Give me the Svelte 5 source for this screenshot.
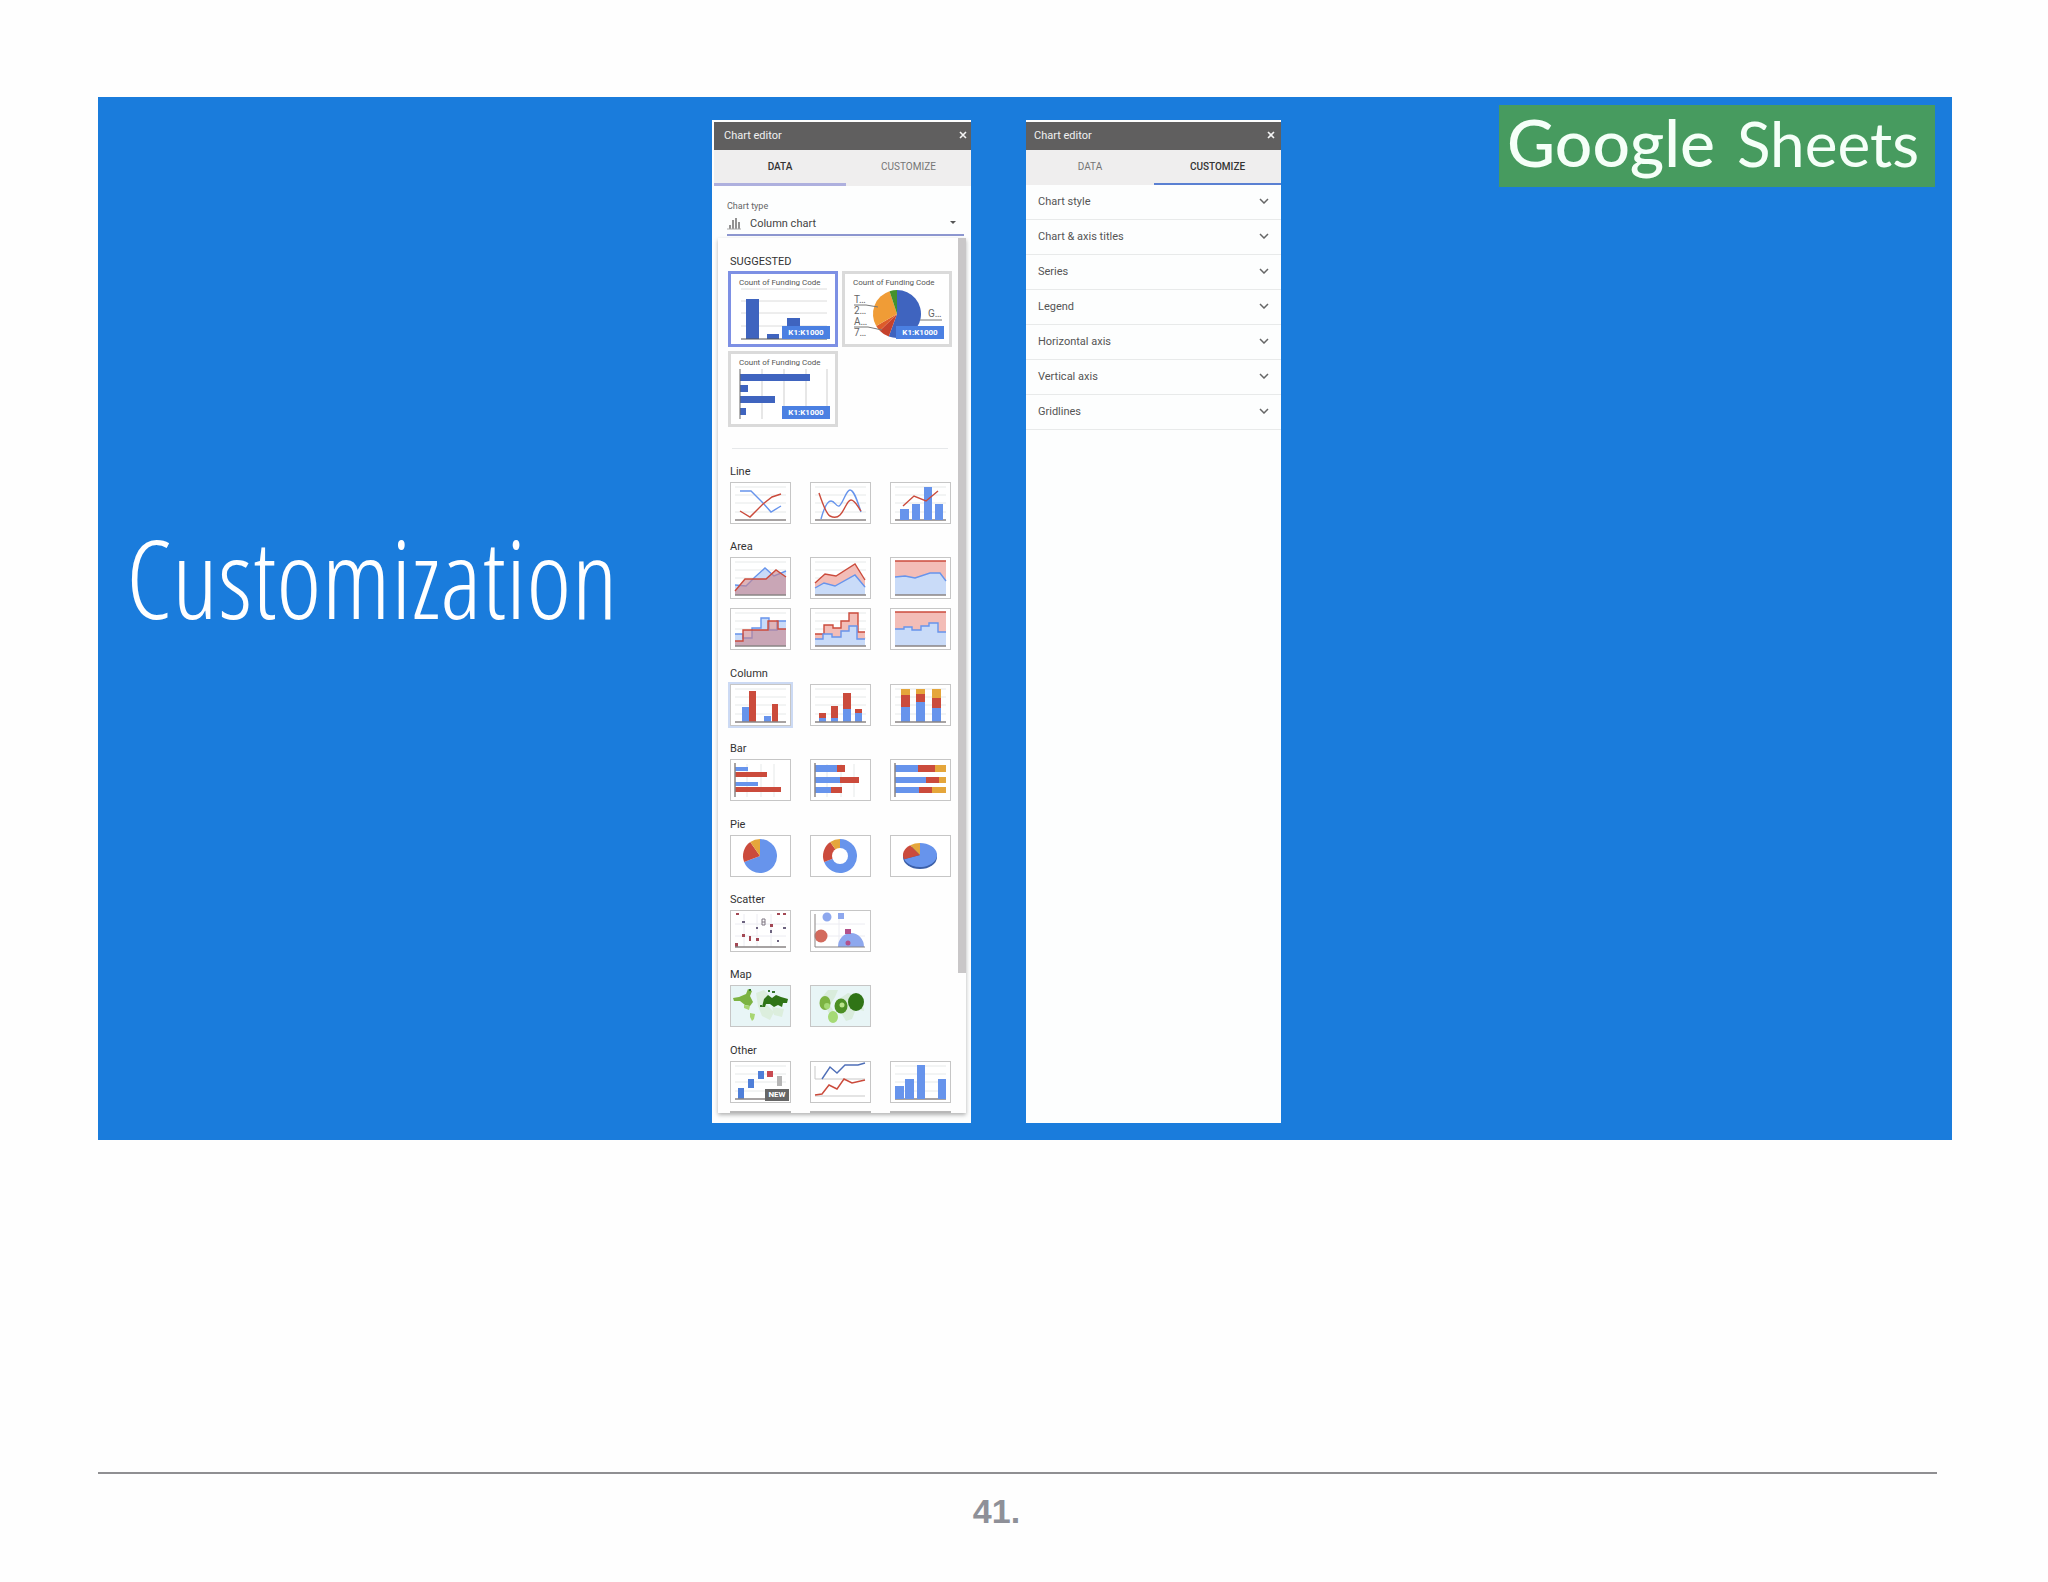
<script lang="ts">
	type Shape = {
		d: string
		fill?: string
		stroke?: string
		width?: number
	}

	type Thumb = {
		name: string
		shapes: Shape[]
		selected?: boolean
		background?: string
		tag?: string
	}

	type Section = {
		title: string
		thumbs: Thumb[]
	}

	const BLUE = '#6794ec'
	const RED = '#cb4b3c'
	const YELLOW = '#e5a63b'
	const DARK_BLUE = '#3f64bf'
	const PALE_BLUE = '#c9dbf8'
	const PALE_RED = '#f3bdb7'
	const GRID = '#e6e9e9'
	const AXIS = '#8a8585'

	function rect(x: number, y: number, w: number, h: number): string {
		return `M${x},${y}h${w}v${h}h${-w}z`;
	}

	function ellipse(cx: number, cy: number, rx: number, ry: number = rx): string {
		return `M${cx - rx},${cy}a${rx},${ry} 0 1 0 ${2 * rx},0a${rx},${ry} 0 1 0 ${-2 * rx},0z`;
	}

	// angles are in degrees, clockwise from 12 o'clock
	function sector(cx: number, cy: number, rx: number, ry: number, from: number, to: number): string {
		const point = (angle: number) => {
			const a = angle * Math.PI / 180;
			return `${(cx + rx * Math.sin(a)).toFixed(2)},${(cy - ry * Math.cos(a)).toFixed(2)}`;
		}
		return `M${cx},${cy}L${point(from)}A${rx},${ry} 0 ${to - from > 180 ? 1 : 0} 1 ${point(to)}z`;
	}

	function fill(color: string, ...paths: string[]): Shape {
		return { d: paths.join(''), fill: color };
	}

	function line(color: string, d: string, width = 1.4): Shape {
		return { d, stroke: color, width };
	}

	const rowGrid = line(GRID, 'M5,5H56M5,13H56M5,21H56M5,30H56', 1)
	const colGrid = line(GRID, 'M17,5V38M31,5V38M44,5V38', 1)
	const base = line(AXIS, 'M5,38H56', 1.5)
	const sideAxis = line(AXIS, 'M5,4V38', 1.5)

	function area(topLine: string, color: string, pale: string): Shape[] {
		return [fill(pale, `${topLine}V38H5z`), line(color, topLine)];
	}

	function pie(cy: number, rx: number, ry: number): Shape[] {
		return [
			fill(BLUE, sector(30, cy, rx, ry, 0, 249)),
			fill(RED, sector(30, cy, rx, ry, 249, 325)),
			fill(YELLOW, sector(30, cy, rx, ry, 325, 360))
		];
	}

	const sections: Section[] = [
		{
			title: 'Line',
			thumbs: [
				{ name: 'Line chart', shapes: [rowGrid, base,
					line(BLUE, 'M10,9H21L33,21L41,30L51,24'),
					line(RED, 'M10,29L20,35L33,22L42,15L51,12')] },
				{ name: 'Smooth line chart', shapes: [rowGrid, base,
					line(BLUE, 'M11,37C14,26 17,19 21,19S26,25 29,24C33,22 36,8 40,8S47,18 51,30'),
					line(RED, 'M9,11C12,20 16,32 20,34S27,36 30,33C35,28 37,18 41,18S47,24 51,29')] },
				{ name: 'Combo chart', shapes: [rowGrid, base,
					fill(BLUE, rect(10, 27, 9, 11), rect(22, 22, 8, 16), rect(34, 5, 8, 33), rect(45, 22, 8, 16)),
					line(RED, 'M13,24L24,14L36,19L48,9')] }
			]
		},
		{
			title: 'Area',
			thumbs: [
				{ name: 'Area chart', shapes: [rowGrid,
					...area('M5,28L16,29L25,20L35,11L44,19L56,14', BLUE, PALE_BLUE),
					...area('M5,34L15,22L36,22L46,13L56,20', RED, '#c9828a99'), base] },
				{ name: 'Stacked area chart', shapes: [rowGrid,
					...area('M5,26L15,17L26,19L45,7L55,23', RED, PALE_RED),
					...area('M5,31L14,26L25,29L45,18L55,30', BLUE, PALE_BLUE), base] },
				{ name: '100% stacked area chart', shapes: [
					...area('M5,4H56', RED, PALE_RED),
					...area('M5,20L15,19L25,21L40,16L50,16L56,24', BLUE, PALE_BLUE), base] },
				{ name: 'Stepped area chart', shapes: [rowGrid,
					...area('M5,26H13V30H22V20H31V10H39V22H47V13H56', BLUE, PALE_BLUE),
					...area('M5,33H13V22H38V13H48V21H56', RED, '#c9828a99'), base] },
				{ name: 'Stacked stepped area chart', shapes: [rowGrid,
					...area('M5,26H14V17H23V20H31V13H39V5H48V24H55', RED, PALE_RED),
					...area('M5,31H13V26H22V29H31V23H39V18H47V31H55', BLUE, PALE_BLUE), base] },
				{ name: '100% stacked stepped area chart', shapes: [
					...area('M5,4H56', RED, PALE_RED),
					...area('M5,21H14V19H22V22H31V18H39V15H48V24H56', BLUE, PALE_BLUE), base] }
			]
		},
		{
			title: 'Column',
			thumbs: [
				{ name: 'Column chart', selected: true, shapes: [rowGrid,
					fill(BLUE, rect(12, 23, 7, 15), rect(34, 32, 7, 6)),
					fill(RED, rect(19, 7, 7, 31), rect(42, 20, 6, 18)), base] },
				{ name: 'Stacked column chart', shapes: [rowGrid,
					fill(RED, rect(9, 29, 7, 5), rect(21, 22, 7, 12), rect(33, 9, 8, 16), rect(45, 25, 7, 4)),
					fill(BLUE, rect(9, 34, 7, 4), rect(21, 34, 7, 4), rect(33, 25, 8, 13), rect(45, 29, 7, 9)), base] },
				{ name: '100% stacked column chart', shapes: [rowGrid,
					fill(YELLOW, rect(11, 5, 9, 6), rect(26, 5, 9, 5), rect(42, 5, 9, 9)),
					fill(RED, rect(11, 11, 9, 12), rect(26, 10, 9, 8), rect(42, 14, 9, 10)),
					fill(BLUE, rect(11, 23, 9, 15), rect(26, 18, 9, 20), rect(42, 24, 9, 14)), base] }
			]
		},
		{
			title: 'Bar',
			thumbs: [
				{ name: 'Bar chart', shapes: [colGrid,
					fill(BLUE, rect(5, 8, 13, 4), rect(5, 23, 23, 4)),
					fill(RED, rect(5, 13, 32, 5), rect(5, 28, 46, 5)), sideAxis] },
				{ name: 'Stacked bar chart', shapes: [colGrid,
					fill(BLUE, rect(5, 6, 22, 7), rect(5, 18, 25, 6), rect(5, 28, 16, 6)),
					fill(RED, rect(27, 6, 8, 7), rect(30, 18, 19, 6), rect(21, 28, 11, 6)), sideAxis] },
				{ name: '100% stacked bar chart', shapes: [
					fill(BLUE, rect(5, 6, 23, 7), rect(5, 18, 31, 6), rect(5, 28, 24, 6)),
					fill(RED, rect(28, 6, 17, 7), rect(36, 18, 13, 6), rect(29, 28, 13, 6)),
					fill(YELLOW, rect(45, 6, 11, 7), rect(49, 18, 7, 6), rect(42, 28, 14, 6)), sideAxis] }
			]
		},
		{
			title: 'Pie',
			thumbs: [
				{ name: 'Pie chart', shapes: pie(21, 17, 17) },
				{ name: 'Doughnut chart', shapes: [...pie(21, 17, 17), fill('#fff', ellipse(30, 21, 8))] },
				{ name: '3D pie chart', shapes: [fill('#3b5fa8', ellipse(30, 22, 17, 12)), ...pie(20, 17, 12)] }
			]
		},
		{
			title: 'Scatter',
			thumbs: [
				{ name: 'Scatter chart', shapes: [
					line('#ececf2', 'M5,14H56M5,26H56M14,4V37M27,4V37M41,4V37', 1),
					fill('#a34854', rect(6, 3, 3, 2), rect(47, 3, 3, 2), rect(53, 3, 3, 2), rect(12, 24, 3, 3), rect(5, 33, 3, 4),
						rect(19, 26, 2, 5), rect(26, 28, 3, 3), rect(40, 14, 3, 3)),
					fill('#6d6480', rect(12, 11, 3, 2), rect(26, 17, 2, 2), rect(40, 20, 2, 3), rect(47, 30, 2, 2), rect(53, 17, 3, 2)),
					line('#7c7480', rect(32, 9, 3, 6) + 'M32,12h3', 1), line(AXIS, 'M5,37H56', 1.5)] },
				{ name: 'Bubble chart', shapes: [
					line('#ececf2', 'M5,14H55M5,26H55M29,4V37', 1),
					fill('#8ea8ee', ellipse(17, 7, 4.5), rect(28, 3, 6, 6), 'M28,37a13,14 0 0 1 26,0z'),
					fill('#d36a5d', ellipse(11, 26, 6.5)),
					fill('#b2518a', rect(35, 19, 6, 5), ellipse(38, 33, 2.5)),
					line(AXIS, 'M5,4V37H55', 1)] }
			]
		},
		{
			title: 'Map',
			thumbs: [
				{ name: 'Geo chart', background: '#e8f5f6', shapes: [
					fill('#dceedd', 'M26,8l8,-3l6,6l-4,8l8,8l-4,8l-8,-4l-4,-10z', 'M42,22l12,2l-2,8l-8,-2z'),
					fill('#7cb342', 'M3,13L9,12L16,9L18,4L22,6L20,11L23,17L20,21L15,20L10,16L4,16z'),
					fill('#a8d672', 'M14,20L20,21L19,25L14,23zM20,28L25,29L24,34L22,36L20,32z'),
					fill('#2f7416', 'M34,14L38,10L42,13L46,10L51,12L58,14L57,18L53,18L52,22L48,20L44,22L40,19L36,19L35,22L32,22z'),
					fill('#35762f', rect(38, 5, 2, 2), rect(42, 6, 3, 2), rect(19, 4, 2, 2), rect(30, 20, 2, 2))] },
				{ name: 'Geo chart with markers', background: '#e8f5f6', shapes: [
					fill('#d9ecdc', 'M9,16L18,5L28,5L25,12L20,20L26,30L22,36L17,24z', 'M26,16L38,8L52,12L54,26L46,24L42,34L36,36L30,26z'),
					fill('#7cb342', ellipse(15, 18, 5.5, 7)),
					fill('#a5da75', ellipse(17, 21, 3), ellipse(23, 32, 5, 6)),
					fill('#4c8f24', ellipse(31, 21, 6.5, 7.5)),
					fill('#b9e38c', ellipse(32, 20, 2.5)),
					fill('#2f7416', ellipse(46, 17, 8, 9))] }
			]
		},
		{
			title: 'Other',
			thumbs: [
				{ name: 'Waterfall chart', tag: 'NEW', shapes: [rowGrid,
					fill('#4f7fd9', rect(8, 27, 6, 11), rect(18, 18, 6, 9), rect(28, 10, 6, 8)),
					fill('#c94a52', rect(37, 10, 6, 6)),
					fill('#b5b5b5', rect(47, 15, 5, 10)), base] },
				{ name: 'Timeline chart', shapes: [
					line('#c9c9c9', 'M5,5V18H55M5,35H55', 1),
					line('#4f6fb8', 'M12,18L20,6L27,12L35,4H48L55,2'),
					line(RED, 'M5,34L12,33L19,24L27,28L34,18L42,22L55,19')] },
				{ name: 'Histogram chart', shapes: [rowGrid, base,
					fill(BLUE, rect(5, 25, 9, 13), rect(15, 18, 9, 20), rect(27, 4, 8, 34), rect(48, 18, 8, 20))] }
			]
		}
	]

	const suggested = [
		{
			labels: [],
			shapes: [
				line('#dcdcdc', 'M13,18H99M13,30H99M13,42H99M13,55H99', 1),
				fill(DARK_BLUE, rect(18, 28, 13, 40), rect(39, 63, 12, 5), rect(59, 47, 13, 21)),
				line('#555', 'M13,68H99', 1)
			]
		},
		{
			labels: [
				{ x: 12, y: 32, text: 'T…' },
				{ x: 12, y: 43, text: '2…' },
				{ x: 12, y: 54, text: 'A…' },
				{ x: 12, y: 65, text: '7…' },
				{ x: 86, y: 46, text: 'G…' }
			],
			shapes: [
				fill(DARK_BLUE, sector(55, 43, 24, 24, 0, 200)),
				fill('#c6422c', sector(55, 43, 24, 24, 200, 226)),
				fill('#dd5b2a', sector(55, 43, 24, 24, 226, 240)),
				fill('#f09c36', sector(55, 43, 24, 24, 240, 342)),
				fill('#45912d', sector(55, 43, 24, 24, 342, 360)),
				line('#777', 'M12,34H24L36,36M12,56H26L40,59M78,49H100', 1)
			]
		},
		{
			labels: [],
			shapes: [
				line('#cfcfcf', 'M34,18V68M56,18V68M78,18V68M99,18V68', 1),
				fill(DARK_BLUE, rect(12, 23, 70, 7), rect(12, 34, 8, 7), rect(12, 45, 35, 7), rect(12, 57, 6, 7)),
				line('#666', 'M12,18V68', 1)
			]
		}
	]

	const settings = ['Chart style', 'Chart & axis titles', 'Series', 'Legend', 'Horizontal axis', 'Vertical axis', 'Gridlines']

	let selectedCard = $state(0)
	let chartType = $state('Column chart')
</script>

{#snippet drawing(shapes: Shape[])}
	{#each shapes as shape}
		<path d={shape.d} fill={shape.fill ?? 'none'} stroke={shape.stroke ?? 'none'} stroke-width={shape.width ?? 0} />
	{/each}
{/snippet}

{#snippet header(active: string)}
	<header>
		<h2>Chart editor</h2>
		<button class="close" aria-label="Close">
			<svg width="8" height="8" viewBox="0 0 8 8"><path d="M1,1L7,7M7,1L1,7" stroke="#f4f4f4" stroke-width="1.6" /></svg>
		</button>
	</header>
	<div class="tabs" role="tablist">
		{#each ['DATA', 'CUSTOMIZE'] as tab}
			<button role="tab" aria-selected={tab === active} class:active={tab === active}>{tab}</button>
		{/each}
	</div>
{/snippet}

<main>
	<section class="slide">
		<h1>Customization</h1>

		<div class="panels">
			<div class="panel data">
				{@render header('DATA')}

				<div class="chart-type">
					<label for="chart-type">Chart type</label>
					<div class="picker">
						<svg width="14" height="13" viewBox="0 0 14 13">
							<path d="M3,12V8M6,12V3M9,12V1M12,12V5" stroke="#666" stroke-width="1.4" />
							<path d="M0,12H14" stroke="#aaa" stroke-width="1" />
						</svg>
						<select id="chart-type" bind:value={chartType}>
							<option>Column chart</option>
							<option>Pie chart</option>
							<option>Bar chart</option>
						</select>
						<svg width="6" height="4" viewBox="0 0 6 4"><path d="M0,0H6L3,3z" fill="#555" /></svg>
					</div>
				</div>

				<div class="menu">
					<div class="charts">
						<h3>SUGGESTED</h3>
						<div class="cards">
							{#each suggested as card, i}
								<button class="card" class:selected={selectedCard === i} onclick={() => selectedCard = i}>
									<span class="card-title">Count of Funding Code</span>
									<svg viewBox="3 3 104 70" aria-hidden="true">
										{@render drawing(card.shapes)}
										{#each card.labels as label}
											<text x={label.x} y={label.y}>{label.text}</text>
										{/each}
									</svg>
									<span class="range">K1:K1000</span>
								</button>
							{/each}
						</div>

						<hr>

						<div class="groups">
							{#each sections as section}
								<section>
									<h3>{section.title}</h3>
									<div class="thumbs">
										{#each section.thumbs as thumb}
											<button class="thumb" class:selected={thumb.selected} aria-label={thumb.name}>
												<svg viewBox="1 1 59 40">
													{#if thumb.background}
														<rect x="1" y="1" width="59" height="40" fill={thumb.background} />
													{/if}
													{@render drawing(thumb.shapes)}
												</svg>
												{#if thumb.tag}
													<span class="tag">{thumb.tag}</span>
												{/if}
											</button>
										{/each}
									</div>
								</section>
							{/each}
						</div>

						<div class="cut-row"><i></i><i></i><i></i></div>
					</div>
					<div class="scrollbar"><div class="handle"></div></div>
				</div>
			</div>

			<div class="panel customize">
				{@render header('CUSTOMIZE')}
				{#each settings as setting}
					<button class="setting">
						{setting}
						<svg width="10" height="6" viewBox="0 0 10 6"><path d="M1,1L5,5L9,1" fill="none" stroke="#666" stroke-width="1.5" /></svg>
					</button>
				{/each}
			</div>
		</div>

		<div class="logo"><span class="google">Google</span><span class="sheets">Sheets</span></div>
	</section>

	<footer>41.</footer>
</main>

<style>
	:global(body) {
		background: #fefefe;
	}

	main {
		box-sizing: border-box;
		min-height: 100vh;
		padding: 97px 96px 0 98px;
		display: flex;
		flex-direction: column;
		font-family: Roboto, "Liberation Sans", sans-serif;
	}

	h1, h2, h3 {
		margin: 0;
	}

	button {
		font: inherit;
		border: none;
		background: none;
		padding: 0;
		margin: 0;
		cursor: pointer;
	}

	svg {
		display: block;
	}

	.slide {
		display: grid;
		grid-template-columns: 614fr auto 671fr;
		aspect-ratio: 16 / 9;
		background: #1a7cdc;
	}

	h1 {
		align-self: center;
		padding: 0 0 82px 28px;
		color: #fff;
		font-family: "Open Sans Condensed Light", "Open Sans Condensed", "Open Sans", sans-serif;
		font-weight: 300;
		font-size: 109px;
		line-height: 152px;
	}

	.panels {
		display: flex;
		gap: 55px;
		padding: 23px 0 17px;
	}

	.panel {
		box-sizing: border-box;
		display: flex;
		flex-direction: column;
		width: 259px;
		padding: 2px 0 10px 2px;
		background: #fdfefe;
	}

	.customize {
		width: 255px;
		padding: 2px 0 0;
	}

	header {
		box-sizing: border-box;
		display: flex;
		align-items: center;
		justify-content: space-between;
		height: 28px;
		padding: 0 4px 2px 10px;
		background: #605f5f;
		color: #f1f1f1;
	}

	.customize header {
		padding: 0 6px 2px 8px;
	}

	h2 {
		font-size: 11px;
		font-weight: 400;
	}

	.tabs {
		display: grid;
		grid-template-columns: 132px 1fr;
		height: 36px;
		background: #efeeee;
	}

	.tabs button {
		font-size: 10px;
		color: #757575;
		border-bottom: 3px solid transparent;
	}

	.tabs .active {
		color: #333;
		font-weight: 500;
		border-color: #aeb0de;
	}

	.customize .tabs {
		grid-template-columns: 128px 1fr;
		height: 35px;
	}

	.customize .tabs button {
		border-bottom-width: 2px;
	}

	.customize .tabs .active {
		border-color: #5a80d2;
	}

	.chart-type {
		margin: 14px 7px 0 13px;
		border-bottom: 2px solid #8d97d0;
	}

	label {
		display: block;
		font-size: 9px;
		line-height: 12px;
		color: #666;
	}

	.picker {
		display: flex;
		align-items: center;
		height: 22px;
		padding-right: 8px;
	}

	select {
		flex: 1;
		appearance: none;
		border: none;
		background: none;
		padding: 0 0 0 9px;
		font-family: inherit;
		font-size: 11px;
		color: #444;
	}

	.menu {
		flex: 1;
		display: flex;
		justify-content: space-between;
		margin: 2px 5px 0 4px;
		background: #fefefe;
		box-shadow: 0 2px 4px rgba(0, 0, 0, 0.3);
	}

	.charts {
		display: flex;
		flex-direction: column;
		width: 234px;
		padding-top: 17px;
	}

	h3 {
		padding-left: 12px;
		font-size: 11px;
		font-weight: 400;
		line-height: 14px;
		color: #333;
	}

	.cards {
		display: grid;
		grid-template-columns: 110px 110px;
		gap: 4px;
		padding: 2px 0 0 10px;
	}

	.card {
		position: relative;
		box-sizing: border-box;
		height: 76px;
		border: 3px solid #dadada;
		background: #fff;
	}

	.card.selected {
		border-color: #7d90e4;
	}

	.card svg {
		width: 100%;
	}

	.card text {
		font-size: 10px;
		fill: #666;
	}

	.card-title {
		position: absolute;
		top: 3px;
		left: 8px;
		font-size: 8px;
		line-height: 12px;
		color: #555;
		white-space: nowrap;
	}

	.range {
		position: absolute;
		right: 5px;
		bottom: 5px;
		width: 48px;
		background: #4b80e2;
		color: #fff;
		font-size: 8px;
		font-weight: 700;
		line-height: 13px;
	}

	hr {
		margin: 21px 0 16px 14px;
		width: 216px;
		border: none;
		border-top: 1px solid #e6e8ea;
	}

	.groups {
		flex: 1;
		display: flex;
		flex-direction: column;
		justify-content: space-between;
		margin-bottom: 8px;
	}

	.thumbs {
		display: grid;
		grid-template-columns: repeat(3, 61px);
		gap: 9px 19px;
		padding: 3px 0 0 12px;
	}

	.thumb {
		position: relative;
		box-sizing: border-box;
		height: 42px;
		border: 1px solid #c6c6c6;
		background: #fff;
	}

	.thumb.selected {
		box-shadow: 0 0 0 2px #ccdaf4;
	}

	.thumb svg {
		width: 100%;
	}

	.tag {
		position: absolute;
		right: 1px;
		bottom: 1px;
		width: 24px;
		background: #666;
		color: #fff;
		font-size: 8px;
		font-weight: 700;
		line-height: 12px;
	}

	.cut-row {
		display: grid;
		grid-template-columns: repeat(3, 61px);
		gap: 19px;
		padding-left: 12px;
	}

	.cut-row i {
		height: 2px;
		background: #b8b8b8;
	}

	.scrollbar {
		width: 8px;
	}

	.handle {
		height: 84%;
		background: #c9c7c8;
	}

	.setting {
		box-sizing: border-box;
		display: flex;
		align-items: center;
		justify-content: space-between;
		width: 100%;
		height: 35px;
		padding: 0 12px 2px;
		border-bottom: 1px solid #e8eaea;
		color: #555;
		font-size: 11px;
	}

	.logo {
		justify-self: end;
		align-self: start;
		box-sizing: border-box;
		display: flex;
		align-items: baseline;
		gap: 22px;
		height: 82px;
		margin: 8px 17px 0 0;
		padding: 0 16px 0 8px;
		background: #479b5f;
		color: #f5fff8;
		font-family: Lato, sans-serif;
		line-height: 74px;
	}

	.google {
		font-size: 66px;
		font-weight: 500;
	}

	.sheets {
		font-size: 62px;
	}

	footer {
		margin: auto 15px 0 0;
		box-sizing: border-box;
		height: 110px;
		padding: 17px 42px 0 0;
		border-top: 2px solid #8f8f92;
		color: #8e9098;
		font-family: "Liberation Sans", sans-serif;
		font-size: 34px;
		font-weight: 700;
		line-height: 40px;
		text-align: center;
	}
</style>
